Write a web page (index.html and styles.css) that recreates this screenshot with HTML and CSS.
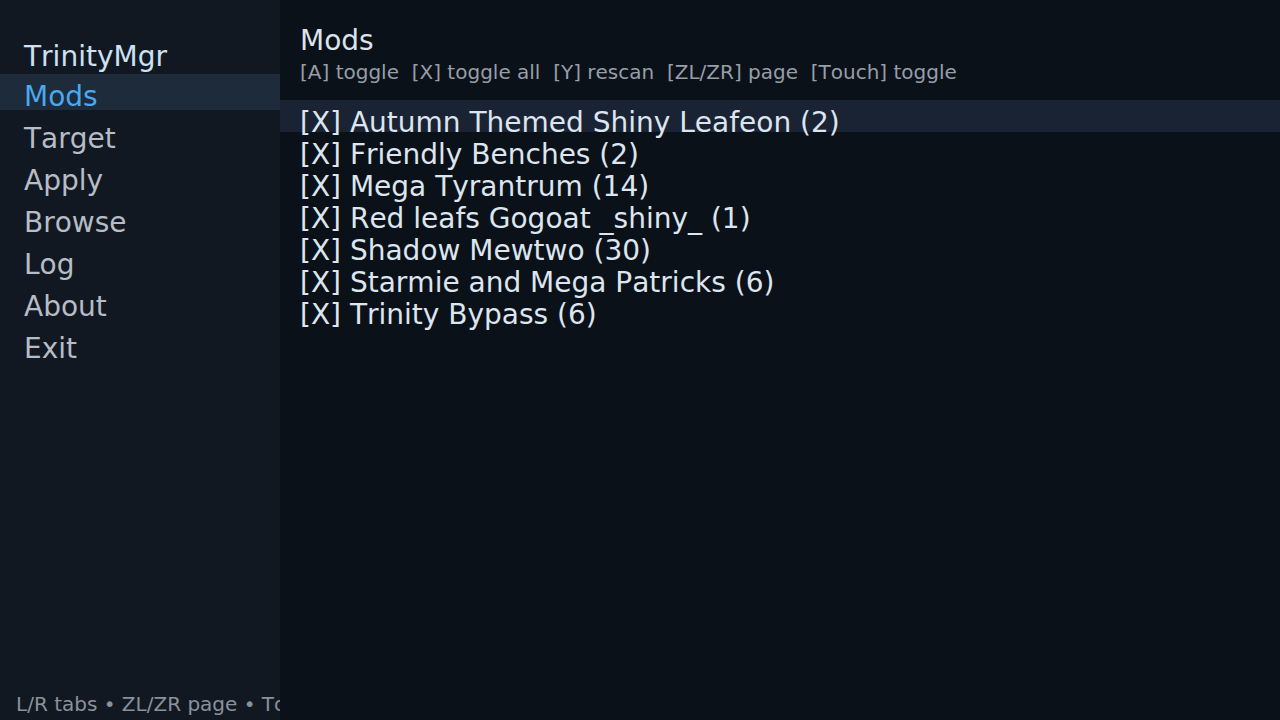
FILE: index.html
```html
<!DOCTYPE html>
<html>
<head>
<meta charset="utf-8">
<link rel="stylesheet" href="styles.css">
</head>
<body>
<div class="app">
  <aside class="sidebar">
    <div class="brand">TrinityMgr</div>
    <nav class="nav">
      <div class="nav-item active">Mods</div>
      <div class="nav-item">Target</div>
      <div class="nav-item">Apply</div>
      <div class="nav-item">Browse</div>
      <div class="nav-item">Log</div>
      <div class="nav-item">About</div>
      <div class="nav-item">Exit</div>
    </nav>
    <div class="footer">L/R tabs • ZL/ZR page • Touch select</div>
  </aside>
  <main class="main">
    <header class="head">
      <div class="title">Mods</div>
      <div class="hints">[A] toggle&nbsp; [X] toggle all&nbsp; [Y] rescan&nbsp; [ZL/ZR] page&nbsp; [Touch] toggle</div>
    </header>
    <div class="list">
      <div class="row sel">[X] Autumn Themed Shiny Leafeon (2)</div>
      <div class="row">[X] Friendly Benches (2)</div>
      <div class="row">[X] Mega Tyrantrum (14)</div>
      <div class="row">[X] Red leafs Gogoat _shiny_ (1)</div>
      <div class="row">[X] Shadow Mewtwo (30)</div>
      <div class="row">[X] Starmie and Mega Patricks (6)</div>
      <div class="row">[X] Trinity Bypass (6)</div>
    </div>
  </main>
</div>
</body>
</html>
```
FILE: styles.css
```css
* { box-sizing: border-box; }
html, body { margin: 0; padding: 0; }
body {
  width: 1280px;
  height: 720px;
  overflow: hidden;
  background: #0b1119;
  font-family: "DejaVu Sans", sans-serif;
  font-kerning: none;
}
.app { display: flex; height: 720px; }
.sidebar {
  width: 280px;
  flex: none;
  background: #121821;
  display: flex;
  flex-direction: column;
  overflow: hidden;
  padding-top: 38px;
}
.brand {
  font-size: 28px;
  height: 36px;
  line-height: 34px;
  padding-top: 2px;
  color: #cde1f3;
  padding-left: 24px;
}
.nav { display: flex; flex-direction: column; }
.nav-item {
  font-size: 28px;
  height: 36px;
  line-height: 36px;
  padding-left: 24px;
  padding-top: 5px;
  margin-bottom: 6px;
  color: #b7bdc6;
  white-space: nowrap;
}
.nav-item.active {
  background: #1e2b3b;
  color: #4aa8ee;
}
.footer {
  margin-top: auto;
  padding-left: 16px;
  font-size: 20px;
  line-height: 28px;
  padding-bottom: 2px;
  color: #8a919b;
  white-space: nowrap;
}
.main { flex: 1; display: flex; flex-direction: column; }
.head { padding: 24px 20px 0; height: 100px; }
.title { font-size: 28px; line-height: 34px; color: #dbe3ec; }
.hints {
  font-size: 20px;
  line-height: 28px;
  color: #979ea8;
  white-space: nowrap;
}
.list { display: flex; flex-direction: column; }
.row {
  height: 32px;
  line-height: 32px;
  padding-left: 20px;
  padding-top: 7px;
  font-size: 28px;
  color: #dde5ee;
  white-space: nowrap;
}
.row.sel { background: #1a2333; }
```
